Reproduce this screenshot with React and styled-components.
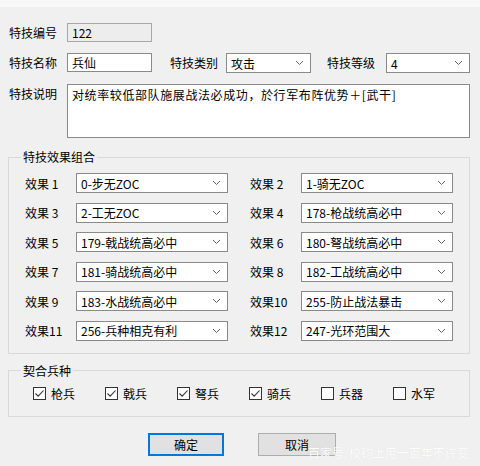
import styled, { createGlobalStyle } from 'styled-components'

const GlobalStyle = createGlobalStyle`
    html, body {
        margin: 0;
        padding: 0;
        background: #f0f0f0;
    }
    body {
        font-family: "Noto Sans CJK SC", "Liberation Sans", sans-serif;
        font-size: 12px;
        color: #000;
    }
`

const effects = [
    ['效果 1', '0-步无ZOC'],
    ['效果 2', '1-骑无ZOC'],
    ['效果 3', '2-工无ZOC'],
    ['效果 4', '178-枪战统高必中'],
    ['效果 5', '179-戟战统高必中'],
    ['效果 6', '180-弩战统高必中'],
    ['效果 7', '181-骑战统高必中'],
    ['效果 8', '182-工战统高必中'],
    ['效果 9', '183-水战统高必中'],
    ['效果10', '255-防止战法暴击'],
    ['效果11', '256-兵种相克有利'],
    ['效果12', '247-光环范围大'],
]

const troops = [
    ['枪兵', true],
    ['戟兵', true],
    ['弩兵', true],
    ['骑兵', true],
    ['兵器', false],
    ['水军', false],
]

const Chevron = () => (
    <svg width="9" height="6" viewBox="0 0 9 6">
        <path d="M1 1 L4.5 4.5 L8 1" fill="none" stroke="#606060" strokeWidth="1" />
    </svg>
)

const Check = () => (
    <svg width="11" height="11" viewBox="0 0 11 11">
        <path d="M1.5 5.5 L4.2 8.2 L9.5 2.5" fill="none" stroke="#333" strokeWidth="1.1" />
    </svg>
)

const Combo = ({ value, width }) => (
    <Select width={width}>
        <span>{value}</span>
        <Chevron />
    </Select>
)

const App = () => {
    return (
        <Dialog>
            <GlobalStyle />
            <TopEdge />
            <Form>
                <Row>
                    <Label width={58}>特技编号</Label>
                    <TextBox width={85} readOnly>122</TextBox>
                </Row>
                <Row>
                    <Label width={58}>特技名称</Label>
                    <TextBox width={85}>兵仙</TextBox>
                    <Label width={56} gap={18}>特技类别</Label>
                    <Combo value="攻击" width={85} />
                    <Label width={59} gap={16}>特技等级</Label>
                    <Combo value="4" width={84} />
                </Row>
                <Row>
                    <Label width={58} top>特技说明</Label>
                    <TextArea>对统率较低部队施展战法必成功，於行军布阵优势＋[武干]</TextArea>
                </Row>

                <Group>
                    <Legend>特技效果组合</Legend>
                    <EffectGrid>
                        {effects.map(([label, value]) => (
                            <Effect key={label}>
                                <EffectLabel>{label}</EffectLabel>
                                <Combo value={value} width={152} />
                            </Effect>
                        ))}
                    </EffectGrid>
                </Group>

                <Group second>
                    <Legend>契合兵种</Legend>
                    <CheckRow>
                        {troops.map(([name, on]) => (
                            <CheckItem key={name}>
                                <Box>{on && <Check />}</Box>
                                {name}
                            </CheckItem>
                        ))}
                    </CheckRow>
                </Group>

                <Buttons>
                    <Button primary>确定</Button>
                    <Button>取消</Button>
                </Buttons>
            </Form>
            <Watermark>百家号/校钧上用一百年不许变</Watermark>
        </Dialog>
    )
}

export default App

const Dialog = styled.div`
    position: relative;
    width: 480px;
    height: 466px;
    overflow: hidden;
    background: #f0f0f0;
`

const TopEdge = styled.div`
    height: 7px;
    background: #f7f7f7;
`

const Form = styled.div`
    padding: 16px 10px 0 9px;
`

const Row = styled.div`
    display: flex;
    align-items: flex-start;
    margin-bottom: 11px;

    &:nth-child(3) {
        margin-bottom: 0;
    }
`

const Label = styled.div`
    flex: none;
    width: ${p => p.width}px;
    margin-left: ${p => p.gap || 0}px;
    line-height: ${p => (p.top ? '18px' : '19px')};
    padding-top: ${p => (p.top ? '1px' : '0')};
    white-space: nowrap;
`

const TextBox = styled.div`
    box-sizing: border-box;
    width: ${p => p.width}px;
    height: 19px;
    line-height: 17px;
    padding: 0 4px;
    border: 1px solid ${p => (p.readOnly ? '#a8a8a8' : '#8a8a8a')};
    background: ${p => (p.readOnly ? '#ededed' : '#fff')};
    white-space: nowrap;
`

const Select = styled.div`
    box-sizing: border-box;
    display: flex;
    align-items: center;
    justify-content: space-between;
    flex: none;
    width: ${p => p.width}px;
    height: 20px;
    padding: 0 6px 0 4px;
    border: 1px solid #8a8a8a;
    background: #fff;
    white-space: nowrap;
`

const TextArea = styled.div`
    box-sizing: border-box;
    width: 403px;
    height: 54px;
    padding: 1px 4px;
    line-height: 18px;
    letter-spacing: 0.6px;
    border: 1px solid #8a8a8a;
    background: #fff;
`

const Group = styled.fieldset`
    margin: ${p => (p.second ? '9px' : '11px')} 0 0 -1px;
    width: 462px;
    box-sizing: border-box;
    padding: 0;
    border: 1px solid #d9d9d9;
`

const Legend = styled.legend`
    margin-left: 12px;
    padding: 0 2px;
    line-height: 16px;
`

const EffectGrid = styled.div`
    display: grid;
    grid-template-columns: 203px 203px;
    column-gap: 22px;
    row-gap: 9.6px;
    padding: 8px 16px 12px 16px;
`

const Effect = styled.div`
    display: flex;
    align-items: center;
`

const EffectLabel = styled.span`
    width: 51px;
    flex: none;
    white-space: pre;
`

const CheckRow = styled.div`
    display: flex;
    padding: 7px 0 14px 24px;
`

const CheckItem = styled.label`
    display: flex;
    align-items: center;
    gap: 5px;
    width: 72px;
    line-height: 16px;
`

const Box = styled.span`
    box-sizing: border-box;
    display: flex;
    align-items: center;
    justify-content: center;
    width: 13px;
    height: 13px;
    border: 1px solid #333;
    background: #fff;
`

const Buttons = styled.div`
    display: flex;
    justify-content: center;
    gap: 34px;
    margin-top: 16px;
    padding-left: 5px;
`

const Button = styled.div`
    box-sizing: border-box;
    width: ${p => (p.primary ? '76px' : '78px')};
    height: 23px;
    line-height: ${p => (p.primary ? '19px' : '21px')};
    text-align: center;
    background: #e1e1e1;
    border: ${p => (p.primary ? '2px solid #0078d7' : '1px solid #adadad')};
`

const Watermark = styled.div`
    position: absolute;
    left: 308px;
    top: 444px;
    font-size: 12px;
    color: rgba(255, 255, 255, 0.95);
    text-shadow: 0 0 1px rgba(0, 0, 0, 0.08);
    white-space: nowrap;
`
